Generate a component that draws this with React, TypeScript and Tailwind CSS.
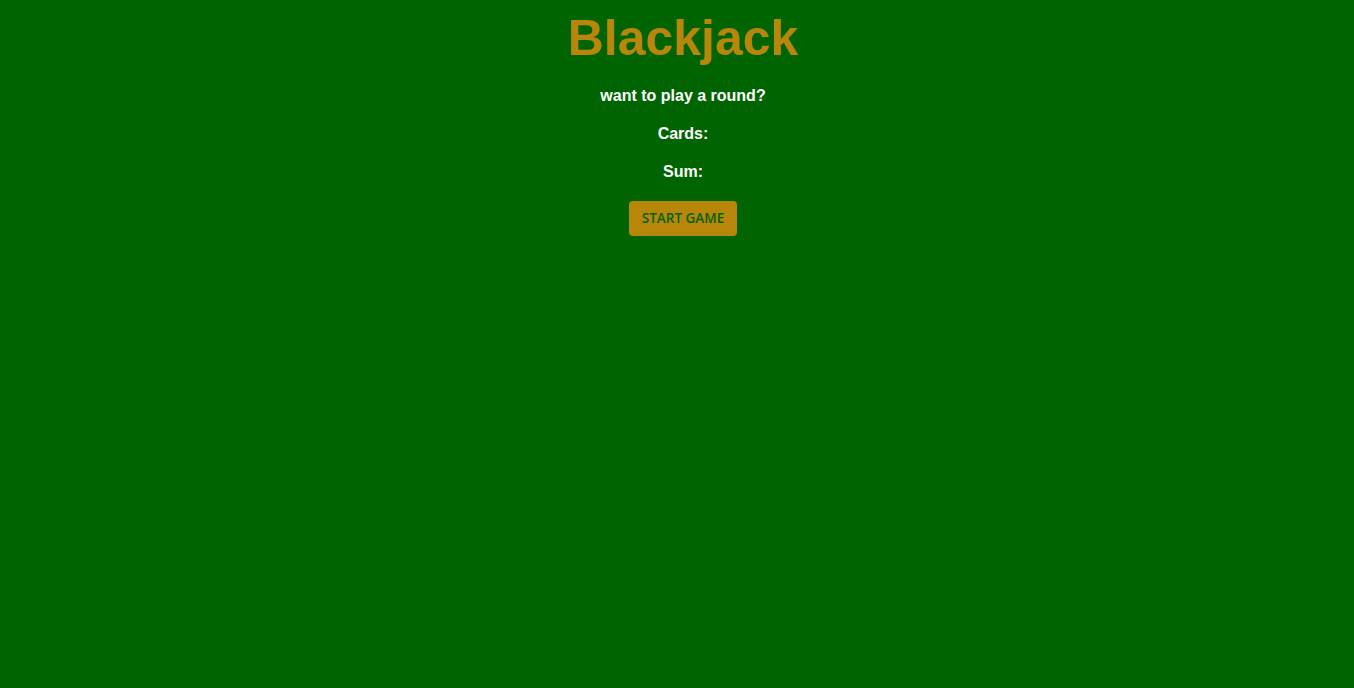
export default function App() {
  return (
    <div className="min-h-screen bg-[#006400] pl-[12px] text-center font-['Liberation_Sans',Arial,sans-serif] font-bold text-white">
      <h1 className="pt-[10px] text-[50px] leading-[56px] text-[#b8860b]">Blackjack</h1>
      <p className="mt-[21px] text-base leading-[18px]">want to play a round?</p>
      <p className="mt-[20px] text-base leading-[18px]">Cards:</p>
      <p className="mt-[20px] text-base leading-[18px]">Sum:</p>
      <button className="mt-[20px] h-[35px] w-[108px] rounded-[4px] bg-[#b8860b] font-['Open_Sans',sans-serif] text-[13.5px] font-semibold text-[#006400]">
        START GAME
      </button>
    </div>
  );
}
